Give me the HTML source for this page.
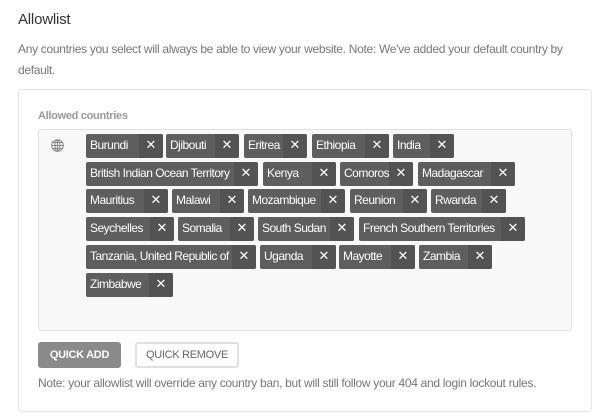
<!DOCTYPE html>
<html><head><style>
*{margin:0;padding:0;box-sizing:border-box}
body{width:610px;height:417px;background:#fff;font-family:"Liberation Sans",sans-serif;position:relative;overflow:hidden}
.a{position:absolute;white-space:nowrap}
h1{position:absolute;left:18px;top:11px;font-size:15px;font-weight:normal;color:#333;letter-spacing:-0.2px}
.p{color:#777;font-size:12px;letter-spacing:-0.3px}
.box{position:absolute;left:18px;top:89px;width:574px;height:323px;border:1px solid #e4e4e4;border-radius:4px}
.inp{position:absolute;left:38px;top:129px;width:534px;height:202px;background:#f8f8f8;border:1px solid #e0e0e0;border-radius:3px}
.t{position:absolute;height:24px;background:#5e5e5e;border-radius:2px;color:#fff;font-size:12px;letter-spacing:-0.5px;line-height:22px;padding-left:4px;overflow:hidden;white-space:nowrap}
.t i{position:absolute;right:0;top:0;width:24px;height:24px;background:#535353;font-style:normal;text-align:center;font-size:13px;line-height:21px;letter-spacing:0}
</style></head><body>
<h1>Allowlist</h1>
<div class="a p" style="left:18px;top:42px">Any countries you select will always be able to view your website. Note: We've added your default country by</div>
<div class="a p" style="left:18px;top:63px">default.</div>
<div class="box"></div>
<div class="a" style="left:38px;top:110px;font-size:11px;color:#999;font-weight:bold;letter-spacing:-0.3px">Allowed countries</div>
<div class="inp"></div>
<svg class="a" style="left:51px;top:139px" width="13" height="13" viewBox="0 0 13 13" fill="none" stroke="#888" stroke-width="1"><circle cx="6.5" cy="6.5" r="5.8"/><ellipse cx="6.5" cy="6.5" rx="2.5" ry="5.8"/><path d="M0.7 6.5H12.3M1.5 3.5H11.5M1.5 9.5H11.5M6.5 0.7V12.3"/></svg>
<div class="t" style="left:86px;top:134px;width:77px">Burundi<i>✕</i></div>
<div class="t" style="left:166px;top:134px;width:73px">Djibouti<i>✕</i></div>
<div class="t" style="left:244px;top:134px;width:63px">Eritrea<i>✕</i></div>
<div class="t" style="left:312px;top:134px;width:77px">Ethiopia<i>✕</i></div>
<div class="t" style="left:393px;top:134px;width:61px">India<i>✕</i></div>
<div class="t" style="left:86px;top:162px;width:172px">British Indian Ocean Territory<i>✕</i></div>
<div class="t" style="left:263px;top:162px;width:73px">Kenya<i>✕</i></div>
<div class="t" style="left:340px;top:162px;width:73px">Comoros<i>✕</i></div>
<div class="t" style="left:418px;top:162px;width:97px">Madagascar<i>✕</i></div>
<div class="t" style="left:86px;top:189px;width:82px">Mauritius<i>✕</i></div>
<div class="t" style="left:172px;top:189px;width:72px">Malawi<i>✕</i></div>
<div class="t" style="left:248px;top:189px;width:97px">Mozambique<i>✕</i></div>
<div class="t" style="left:350px;top:189px;width:77px">Reunion<i>✕</i></div>
<div class="t" style="left:431px;top:189px;width:75px">Rwanda<i>✕</i></div>
<div class="t" style="left:86px;top:217px;width:88px">Seychelles<i>✕</i></div>
<div class="t" style="left:178px;top:217px;width:76px">Somalia<i>✕</i></div>
<div class="t" style="left:258px;top:217px;width:96px">South Sudan<i>✕</i></div>
<div class="t" style="left:359px;top:217px;width:166px">French Southern Territories<i>✕</i></div>
<div class="t" style="left:86px;top:245px;width:170px">Tanzania, United Republic of<i>✕</i></div>
<div class="t" style="left:260px;top:245px;width:76px">Uganda<i>✕</i></div>
<div class="t" style="left:339px;top:245px;width:76px">Mayotte<i>✕</i></div>
<div class="t" style="left:419px;top:245px;width:73px">Zambia<i>✕</i></div>
<div class="t" style="left:86px;top:273px;width:87px">Zimbabwe<i>✕</i></div>
<div class="a" style="left:38px;top:342px;width:83px;height:26px;background:#8a8a8a;border-radius:3px;color:#fff;font-size:11px;font-weight:bold;text-align:center;line-height:26px;letter-spacing:-0.3px">QUICK ADD</div>
<div class="a" style="left:135px;top:342px;width:104px;height:26px;border:2px solid #e0e0e0;border-radius:3px;color:#666;font-size:11px;text-align:center;line-height:22px;letter-spacing:-0.3px">QUICK REMOVE</div>
<div class="a p" style="left:38px;top:376px">Note: your allowlist will override any country ban, but will still follow your 404 and login lockout rules.</div>
</body></html>
